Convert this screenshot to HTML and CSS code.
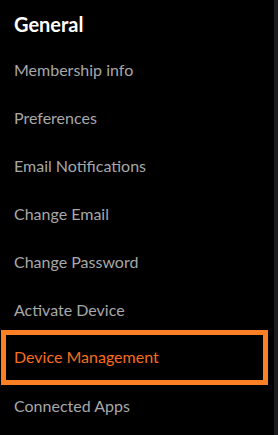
FILE: index.html
```html
<!DOCTYPE html>
<html lang="en">
<head>
    <meta charset="UTF-8">
    <meta name="viewport" content="width=device-width, initial-scale=1.0">
    <title>Account Settings</title>
    <link rel="stylesheet" href="styles.css">
</head>
<body>

<div class="page">
    <nav class="sidebar">
        <h2 class="sidebar-title">General</h2>
        <ul class="menu">
            <li class="menu-item">Membership info</li>
            <li class="menu-item">Preferences</li>
            <li class="menu-item">Email Notifications</li>
            <li class="menu-item">Change Email</li>
            <li class="menu-item">Change Password</li>
            <li class="menu-item">Activate Device</li>
            <li class="menu-item active">Device Management</li>
            <li class="menu-item">Connected Apps</li>
        </ul>
    </nav>
    <div class="content"></div>
</div>

</body>
</html>
```

FILE: styles.css
```css
html, body {
    margin: 0;
    padding: 0;
    height: 100%;
    background-color: #000;
}
body {
    font-family: Lato, "Open Sans", sans-serif;
}
.page {
    display: flex;
    height: 100%;
}
.sidebar {
    width: 274px;
    flex-shrink: 0;
    background-color: #000;
}
.content {
    flex: 1;
    background-color: #1c1c1e;
}
.sidebar-title {
    margin: 0;
    padding: 12px 14px 10px;
    font-size: 20px;
    line-height: 24px;
    font-weight: 700;
    color: #fff;
}
.menu {
    list-style-type: none;
    margin: 0;
    padding: 0;
}
.menu-item {
    height: 48px;
    line-height: 47px;
    padding: 0 14px;
    font-size: 16px;
    color: #a8a8a8;
    white-space: nowrap;
}
.menu-item.active {
    height: 45px;
    line-height: 44px;
    margin: -4px 6px -3px 1px;
    padding: 0 8px;
    border: 5px solid #fb7f24;
    color: #f76d1d;
}
```
